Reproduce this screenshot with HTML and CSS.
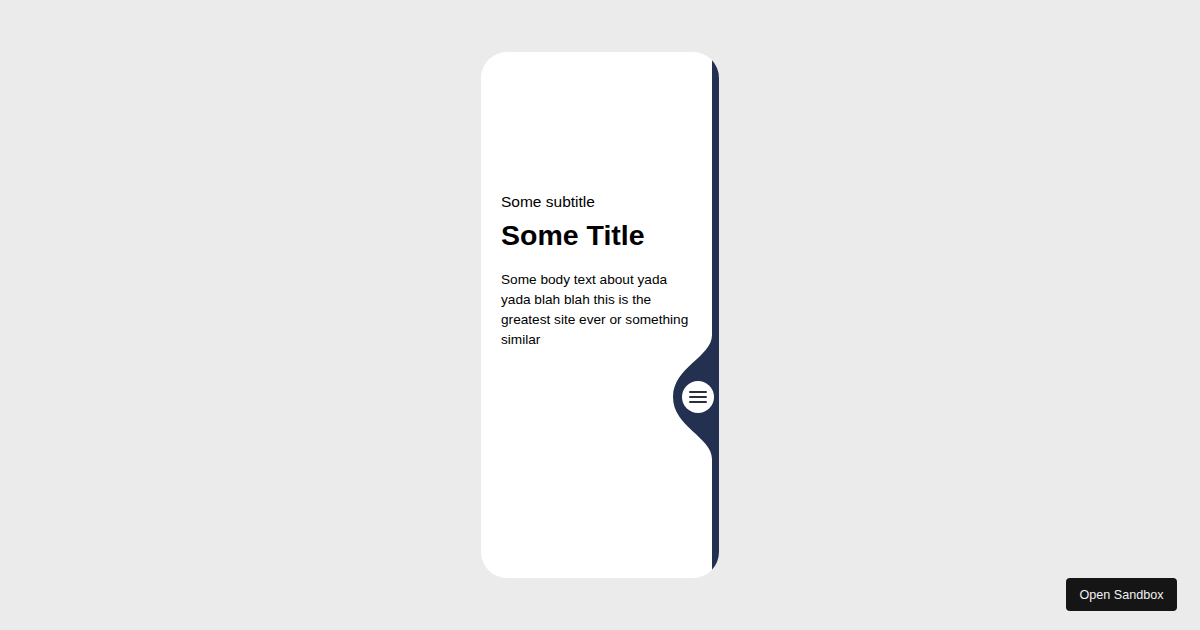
FILE: index.html
```html
<!DOCTYPE html>
<html lang="en">
<head>
<meta charset="utf-8">
<title>Card</title>
<link rel="stylesheet" href="styles.css">
</head>
<body>
<main class="stage">
  <section class="card">
    <div class="content">
      <p class="subtitle">Some subtitle</p>
      <h1 class="title">Some Title</h1>
      <p class="body">Some body text about yada yada blah blah this is the greatest site ever or something similar</p>
    </div>
    <div class="edge">
      <svg class="edge-shape" width="46" height="526" viewBox="0 0 46 526" aria-hidden="true">
        <path d="M39 0 H46 V526 H39 V407 C39 385 0 375 0 345 C0 315 39 305 39 283 Z" fill="#243050"/>
      </svg>
      <button class="menu-btn" aria-label="Menu">
        <svg width="18" height="14" viewBox="0 0 18 14" aria-hidden="true">
          <path d="M1 2 H17 M1 7 H17 M1 12 H17" stroke="#2b2f3a" stroke-width="2" stroke-linecap="round"/>
        </svg>
      </button>
    </div>
  </section>
</main>
<a class="sandbox-btn" href="#">Open Sandbox</a>
</body>
</html>
```

FILE: styles.css
```css
html, body {
  margin: 0;
  padding: 0;
  height: 100%;
}
body {
  background: #ebebeb;
  font-family: "Liberation Sans", Arial, sans-serif;
  color: #000;
}
.stage {
  height: 630px;
  display: flex;
  align-items: center;
  justify-content: center;
}
.card {
  position: relative;
  width: 238px;
  height: 526px;
  background: #fff;
  border-radius: 26px;
  overflow: hidden;
  box-sizing: border-box;
  padding: 140px 30px 0 20px;
}
.content {
  display: flex;
  flex-direction: column;
}
.subtitle {
  margin: 0;
  font-size: 15.5px;
  line-height: 20px;
}
.title {
  margin: 6px 0 0;
  font-size: 28.5px;
  line-height: 34px;
  font-weight: 700;
}
.body {
  margin: 18px 0 0;
  font-size: 13.65px;
  line-height: 20px;
}
.edge {
  position: absolute;
  top: 0;
  right: 0;
  width: 46px;
  height: 526px;
}
.edge-shape {
  display: block;
}
.menu-btn {
  position: absolute;
  left: 9px;
  top: 329px;
  width: 32px;
  height: 32px;
  border: 0;
  padding: 0;
  border-radius: 50%;
  background: #fff;
  display: flex;
  align-items: center;
  justify-content: center;
  cursor: pointer;
}
.menu-btn svg {
  display: block;
}
.sandbox-btn {
  position: fixed;
  right: 23px;
  bottom: 19px;
  width: 111px;
  height: 33px;
  box-sizing: border-box;
  background: #151515;
  color: #f2f2f2;
  border-radius: 4px;
  font-size: 12.6px;
  display: flex;
  align-items: center;
  justify-content: center;
  text-decoration: none;
}
```
